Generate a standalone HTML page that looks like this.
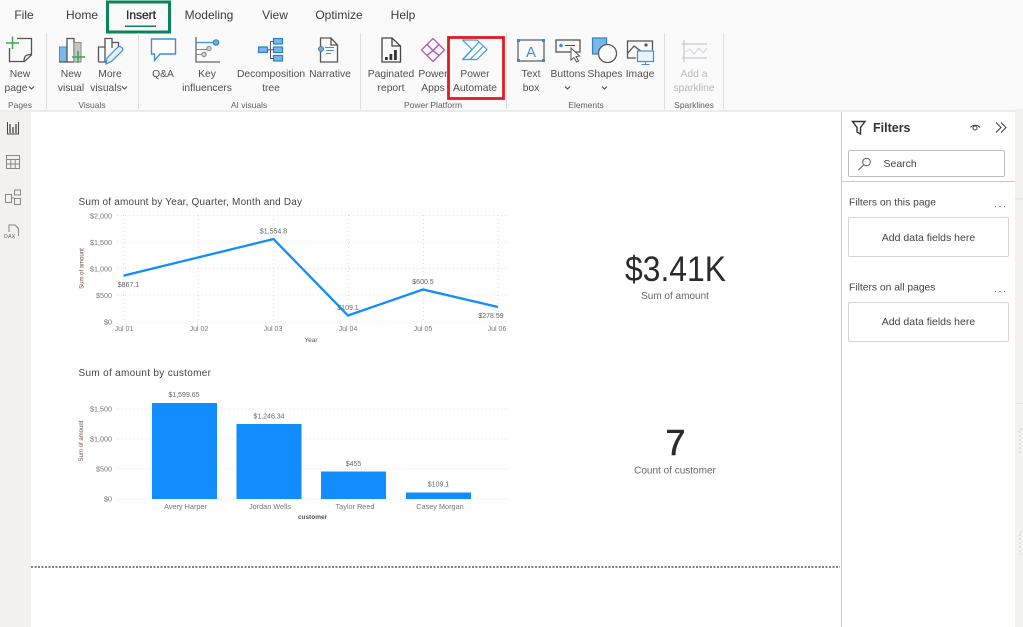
<!DOCTYPE html>
<html><head><meta charset="utf-8">
<style>
html,body{margin:0;padding:0;background:#fff;width:1023px;height:627px;overflow:hidden}
svg{display:block;position:absolute;left:0;top:0}
text{font-family:"Liberation Sans",sans-serif}
.r{font-size:10.3px;fill:#505050;text-anchor:middle}
.g{font-size:8.5px;fill:#606060;text-anchor:middle}
.t{font-size:12px;fill:#3a3a3a;text-anchor:middle}
.a{font-size:7.2px;fill:#777;text-anchor:end}
.x{font-size:7px;fill:#777;text-anchor:middle}
.d{font-size:7px;fill:#666;text-anchor:middle}
.i{fill:none;stroke:#555;stroke-width:1.3}
.b{fill:none;stroke:#3f8fd2;stroke-width:1.3}
.grid{stroke:#dedede;stroke-width:1;stroke-dasharray:1 3}
</style></head><body>
<svg width="1023" height="627" viewBox="0 0 1023 627" xmlns="http://www.w3.org/2000/svg">
<rect width="1023" height="627" fill="#fff"/>
<!-- ribbon -->
<rect width="1023" height="110" fill="#fafafa"/>
<rect y="110" width="1023" height="2" fill="#ececec"/>
<!-- left rail -->
<rect y="112" width="31" height="515" fill="#f2f1f0"/>
<!-- right strip -->
<rect x="1015" y="109" width="8" height="518" fill="#f3f2f1"/>
<rect x="1015" y="198.500" width="8" height="1" fill="#dcdcdc"/>
<rect x="1015" y="403" width="8" height="1" fill="#e2e2e2"/>
<rect x="841" y="112" width="1" height="515" fill="#c8c8c8"/>
<rect x="842" y="181" width="173" height="1" fill="#c9c9c9"/>
<path d="M1022 429h-2v24h2M1022 532h-2v22h2" fill="none" stroke="#d0d0d0" stroke-dasharray="2 2"/>
<!-- tabs -->
<text class="t" x="24" y="19">File</text>
<text class="t" x="82" y="19">Home</text>
<text class="t" x="141" y="19" style="fill:#222;stroke:#222;stroke-width:.25">Insert</text>
<text class="t" x="209" y="19">Modeling</text>
<text class="t" x="275" y="19">View</text>
<text class="t" x="339" y="19">Optimize</text>
<text class="t" x="403" y="19">Help</text>
<rect x="125" y="25.500" width="31" height="1.500" fill="#117865"/>
<rect x="107.500" y="2" width="62" height="30" fill="none" stroke="#0a8458" stroke-width="3"/>
<!-- separators -->
<g stroke="#dedede"><path d="M46.500 33v76M138.500 33v76M360.500 33v76M506.500 33v76M664.500 33v76M723.500 33v76"/></g>
<!-- New page -->
<path class="i" d="M17 38.500H31.500V55L24.500 61.500H9.500V48"/><path class="i" d="M24 61.500C24 57 25 54.500 31.500 54.500"/>
<path d="M12.500 36.500V49M6 43H19" stroke="#3ea651" stroke-width="1.500"/>
<text class="r" x="20" y="77">New</text><text class="r" x="16" y="91">page</text>
<path d="M29 86.500l2.500 2.500 2.500-2.500" fill="none" stroke="#444"/>
<text class="g" x="20" y="108">Pages</text>
<!-- New visual -->
<rect x="59.500" y="47" width="7.500" height="15" fill="#79b6ea" stroke="#3f8fd2"/>
<path class="i" d="M67 62V38.500H74V62M59 62H74"/>
<rect x="74" y="42.500" width="7" height="19.500" fill="#c6c6c6" stroke="#888"/>
<path d="M78 51V63M72 57H85" stroke="#3ea651" stroke-width="1.500"/>
<text class="r" x="71" y="77">New</text><text class="r" x="71" y="91">visual</text>
<!-- More visuals -->
<path class="i" d="M98.500 62V47H105M105 62V38.500H112V48M112 42.500H118.500V47M98.500 62H106"/>
<path d="M106 64L107 58L118 47C120 45.500 124 48.500 122.500 50.500L112 61Z" fill="#e4f0fa" stroke="#3f8fd2" stroke-width="1.200"/>
<text class="r" x="110" y="77">More</text><text class="r" x="106" y="91">visuals</text>
<path d="M122 86.500l2.500 2.500 2.500-2.500" fill="none" stroke="#444"/>
<text class="g" x="92" y="108">Visuals</text>
<!-- Q&A -->
<path d="M151.500 39H175.500V54H160L154.500 60.500V54H151.500Z" fill="#fff" stroke="#3f8fd2" stroke-width="1.400"/>
<text class="r" x="163" y="77">Q&amp;A</text>
<!-- Key influencers -->
<path d="M196 37V62H220" fill="none" stroke="#666" stroke-width="1.300"/>
<path d="M196 42.500H214" stroke="#3f8fd2" stroke-width="1.200"/><circle cx="216" cy="42.500" r="2.800" fill="#6db0e6" stroke="#2e7fc4"/>
<path d="M196 49.500H207M196 54.500H202" stroke="#888"/><circle cx="209" cy="48.500" r="2.200" fill="#ccc" stroke="#888"/><circle cx="204" cy="54.500" r="2.200" fill="#ccc" stroke="#888"/>
<text class="r" x="207" y="77">Key</text><text class="r" x="207" y="91">influencers</text>
<!-- Decomposition -->
<g fill="#79b6ea" stroke="#2e7fc4" stroke-width="1.200"><rect x="258.500" y="47" width="9" height="5.500"/><rect x="273.500" y="38.500" width="9" height="5.500"/><rect x="273.500" y="47" width="9" height="5.500"/><rect x="273.500" y="55.500" width="9" height="5.500"/></g>
<path d="M267.500 49.700H273.500M270.500 41.500V58.500H273.500M270.500 41.500H273.500" fill="none" stroke="#555"/>
<text class="r" x="271" y="77">Decomposition</text><text class="r" x="271" y="91">tree</text>
<!-- Narrative -->
<path class="i" d="M320.500 38H331L337.500 45V62H320.500ZM331 38V45H337.500"/>
<circle cx="321" cy="49" r="2.500" fill="#6db0e6" stroke="#2e7fc4"/>
<path d="M325 47.500H334M326 50.500H334M326 53.500H331" stroke="#3f8fd2"/>
<text class="r" x="330" y="77">Narrative</text>
<text class="g" x="249" y="108">AI visuals</text>
<!-- Paginated -->
<path d="M382 38H392L400.500 46V62H382ZM392 38V46H400.500" fill="none" stroke="#444" stroke-width="1.300"/>
<path d="M385 57h2.800v3H385zM389.500 54h2.800v6h-2.800zM394 50h2.800v10H394z" fill="#333"/>
<text class="r" x="391" y="77">Paginated</text><text class="r" x="391" y="91">report</text>
<!-- Power Apps -->
<g fill="none" stroke="#b15cb5" stroke-width="1.300" stroke-linejoin="round"><path d="M433 38.500L439 44.500L433 50.500L427 44.500Z"/><path d="M427 44.500L421.500 50L427 55.500L433 50.500Z"/><path d="M439 44.500L444.500 50L439 55.500L433 50.500Z"/><path d="M433 50.500L439 55.500L433 61.500L427 55.500Z"/></g>
<text class="r" x="433" y="77">Power</text><text class="r" x="433" y="91">Apps</text>
<!-- Power Automate -->
<g fill="none" stroke="#3f9be6" stroke-width="1.200" stroke-linejoin="round"><path d="M462.500 40H477L487 49.500L477 59.500H462.500L472 49.500Z"/><path d="M463 59.500L479 42M470 59.500L483.500 46"/></g>
<text class="r" x="475" y="77">Power</text><text class="r" x="475" y="91">Automate</text>
<rect x="448.500" y="37.500" width="55" height="61" fill="none" stroke="#e01b24" stroke-width="2.800"/>
<text class="g" x="433" y="108">Power Platform</text>
<!-- Text box -->
<rect x="518" y="40" width="26" height="21" fill="none" stroke="#666" stroke-width="1.300"/>
<g fill="#2e8bd8"><rect x="517" y="39" width="3" height="3"/><rect x="542" y="39" width="3" height="3"/><rect x="517" y="59" width="3" height="3"/><rect x="542" y="59" width="3" height="3"/></g>
<text x="531" y="57" style="font-size:15px;fill:#3f8fd2;text-anchor:middle">A</text>
<text class="r" x="531" y="77">Text</text><text class="r" x="531" y="91">box</text>
<!-- Buttons -->
<rect x="556" y="40" width="24" height="12" fill="none" stroke="#555" stroke-width="1.300"/>
<circle cx="561" cy="45.500" r="1.800" fill="#3f8fd2"/><path d="M565 45.500H575" stroke="#555"/>
<path d="M571 48L571 60L574 57.500L576.500 62L578.500 61L576 56.500L579.500 56Z" fill="#fff" stroke="#555"/>
<text class="r" x="568" y="77">Buttons</text>
<path d="M565 86.500l2.500 2.500 2.500-2.500" fill="none" stroke="#444"/>
<!-- Shapes -->
<rect x="592.500" y="38" width="14" height="16" fill="#79b6ea" stroke="#2e7fc4" stroke-width="1.200"/>
<circle cx="607.500" cy="53.500" r="9" fill="#fff" stroke="#555" stroke-width="1.300"/>
<text class="r" x="605" y="77">Shapes</text>
<path d="M602 86.500l2.500 2.500 2.500-2.500" fill="none" stroke="#444"/>
<!-- Image -->
<path class="i" d="M636 58H627.500V41H652.500V50"/><path class="i" d="M628 53L634 46L642 52"/><circle cx="646" cy="45" r="1.600" fill="#555"/>
<rect x="637.500" y="51" width="16" height="10.500" fill="#eaf4fc" stroke="#3f8fd2" stroke-width="1.200"/><path d="M645.500 61.500V64.500M641.500 64.500H649.500" stroke="#3f8fd2"/>
<text class="r" x="640" y="77">Image</text>
<text class="g" x="586" y="108">Elements</text>
<!-- Sparkline -->
<path d="M684 40V62M682 44H707M682 58H707" fill="none" stroke="#c9c9c9" stroke-width="1.200"/>
<path d="M685 52L690 49L694 54L699 48L703 53L707 48" fill="none" stroke="#bcd6ec"/>
<text class="r" x="694" y="77" style="fill:#b8b8b8">Add a</text><text class="r" x="694" y="91" style="fill:#b8b8b8">sparkline</text>
<text class="g" x="694" y="108">Sparklines</text>
<!-- rail icons -->
<g fill="none" stroke="#666">
<path d="M7.500 122V134H18.500V122" stroke="#444"/><path d="M10 124V133M13 127V133M16 124V133" stroke="#444" stroke-width="1.300"/>
<path d="M6.500 155.500H19.500V168.500H6.500ZM6.500 159.500H19.500M6.500 164H19.500M10.800 159.500V168.500M15.200 159.500V168.500" stroke="#888"/>
<path d="M5.500 194.500H11.500V202.500H5.500ZM14.500 190H20.500V195H14.500ZM14.500 198.500H20.500V204.500H14.500ZM11.500 198H14.500" stroke="#888"/>
<path d="M9 232V225H15L18.500 228.500V236" stroke="#888"/>
</g>
<text x="4" y="238" style="font-size:5.500px;fill:#666">DAX</text>
<!-- line chart -->
<text x="78.500" y="205" textLength="223.500" style="font-size:10px;fill:#444">Sum of amount by Year, Quarter, Month and Day</text>
<g class="grid"><path d="M117 215.500H508M117 242H508M117 268.500H508M117 295H508M117 322H508"/><path d="M123.500 215V322M198.500 215V322M273.500 215V322M348.500 215V322M423.500 215V322M498.500 215V322"/></g>
<g><text class="a" x="112" y="218.500">$2,000</text><text class="a" x="112" y="245">$1,500</text><text class="a" x="112" y="271.500">$1,000</text><text class="a" x="112" y="298">$500</text><text class="a" x="112" y="324.500">$0</text></g>
<g><text class="x" x="124" y="331">Jul 01</text><text class="x" x="199" y="331">Jul 02</text><text class="x" x="273" y="331">Jul 03</text><text class="x" x="348" y="331">Jul 04</text><text class="x" x="423" y="331">Jul 05</text><text class="x" x="497" y="331">Jul 06</text></g>
<text x="311" y="342" style="font-size:6.500px;fill:#555;text-anchor:middle">Year</text>
<text transform="translate(83.500 268.500) rotate(-90)" style="font-size:6px;fill:#6b4a4a;text-anchor:middle">Sum of amount</text>
<path d="M123.500 275.700L273.500 239L348 315.500L423 289.500L498 307" fill="none" stroke="#118dff" stroke-width="2.300"/>
<text class="d" x="128.500" y="287">$867.1</text><text class="d" x="273.500" y="233.500">$1,554.8</text><text class="d" x="348" y="310">$109.1</text><text class="d" x="423" y="284">$600.5</text><text class="d" x="491" y="318">$278.59</text>
<!-- bar chart -->
<text x="78.500" y="376" textLength="132.500" style="font-size:10px;fill:#444">Sum of amount by customer</text>
<g class="grid"><path d="M117 409H508M117 439H508M117 469H508M117 499H508"/></g>
<g fill="#118dff"><rect x="152" y="403" width="65" height="96"/><rect x="236.500" y="424" width="65" height="75"/><rect x="321" y="471.500" width="65" height="27.500"/><rect x="406" y="492.500" width="65" height="6.500"/></g>
<g><text class="a" x="112" y="411.500">$1,500</text><text class="a" x="112" y="441.500">$1,000</text><text class="a" x="112" y="471.500">$500</text><text class="a" x="112" y="501.500">$0</text></g>
<text class="d" x="184" y="397">$1,599.65</text><text class="d" x="269" y="418.500">$1,246.34</text><text class="d" x="353.500" y="466">$455</text><text class="d" x="438.500" y="486.500">$109.1</text>
<text class="x" x="185.500" y="509" style="font-size:7.300px">Avery Harper</text><text class="x" x="270" y="509" style="font-size:7.300px">Jordan Wells</text><text class="x" x="355" y="509" style="font-size:7.300px">Taylor Reed</text><text class="x" x="440" y="509" style="font-size:7.300px">Casey Morgan</text>
<text x="312.500" y="519" style="font-size:6.500px;fill:#555;text-anchor:middle;font-weight:700">customer</text>
<text transform="translate(83 441) rotate(-90)" style="font-size:6px;fill:#6b4a4a;text-anchor:middle">Sum of amount</text>
<!-- cards -->
<text x="625" y="281" textLength="101" lengthAdjust="spacingAndGlyphs" style="font-size:35px;fill:#2b2b2b">$3.41K</text>
<text x="675" y="299" style="font-size:10px;fill:#666">
<tspan text-anchor="middle">Sum of amount</tspan></text>
<text x="675.500" y="455" style="font-size:36px;fill:#2b2b2b;stroke:#2b2b2b;stroke-width:.6;text-anchor:middle">7</text>
<text x="675" y="473.500" style="font-size:10px;fill:#666;text-anchor:middle">Count of customer</text>
<!-- page boundary -->
<path d="M31 567H840" stroke="#555" stroke-width="1.500" stroke-dasharray="2 1.500"/>
<!-- filters -->
<path d="M852.500 121.500H865L860.500 127.500V134L857 132V127.500Z" fill="none" stroke="#333" stroke-width="1.400"/>
<text x="873" y="132" style="font-size:12.500px;fill:#333;font-weight:700">Filters</text>
<path d="M970.500 127.500C973 124.500 977.500 124.500 980 127.500" fill="none" stroke="#444"/><circle cx="975" cy="128" r="2" fill="none" stroke="#444"/>
<path d="M996 122.500L1001 127.500L996 132.500M1001 122.500L1006 127.500L1001 132.500" fill="none" stroke="#444" stroke-width="1.100"/>
<rect x="848.500" y="150.500" width="156" height="26" rx="1.500" fill="#fff" stroke="#bdbdbd"/>
<circle cx="866.500" cy="162" r="3.800" fill="none" stroke="#555"/><path d="M863.500 165L858.500 170" stroke="#555"/>
<text x="883.500" y="167" style="font-size:10.500px;fill:#444">Search</text>
<text x="849" y="205.500" style="font-size:10.300px;fill:#444">Filters on this page</text>
<path d="M995 206.500h1M999.500 206.500h1M1004 206.500h1" stroke="#777"/>
<rect x="848.500" y="217.500" width="160" height="39" rx="1.500" fill="#fff" stroke="#d4d4d4"/>
<text x="928.500" y="241" style="font-size:10.500px;fill:#444;text-anchor:middle">Add data fields here</text>
<text x="849" y="290.500" style="font-size:10.300px;fill:#444">Filters on all pages</text>
<path d="M995 291.500h1M999.500 291.500h1M1004 291.500h1" stroke="#777"/>
<rect x="848.500" y="302.500" width="160" height="39" rx="1.500" fill="#fff" stroke="#d4d4d4"/>
<text x="928.500" y="325" style="font-size:10.500px;fill:#444;text-anchor:middle">Add data fields here</text>
</svg>
</body></html>
